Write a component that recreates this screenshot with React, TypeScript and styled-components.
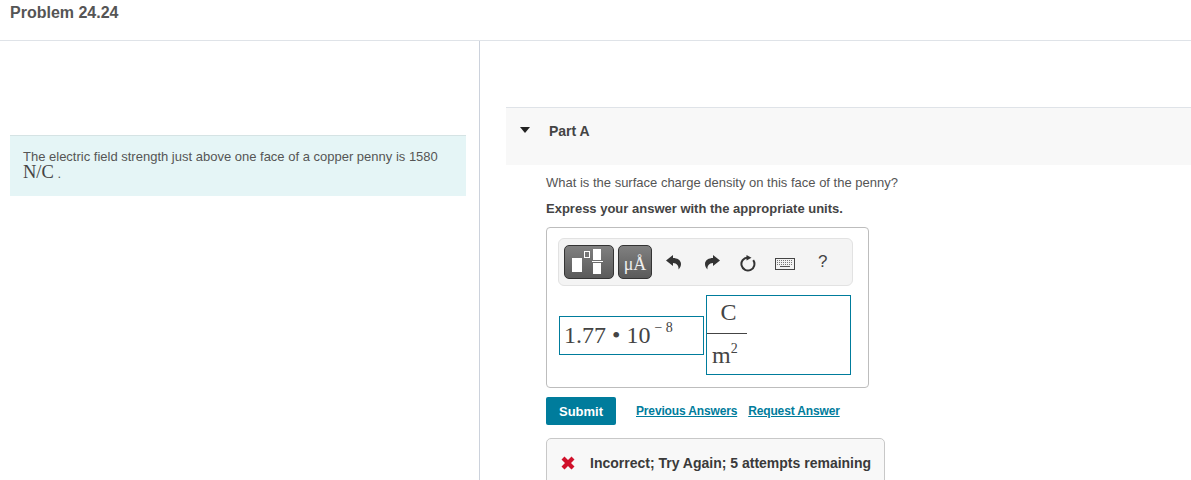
import React from "react";
import styled, { createGlobalStyle } from "styled-components";

const Global = createGlobalStyle`
  html, body { margin: 0; padding: 0; background: #fff; }
  body { font-family: "Liberation Sans", Arial, sans-serif; color: #444; overflow: hidden; height: 480px; }
  #root { height: 480px; overflow: hidden; }
`;

const Page = styled.div`
  width: 1191px;
  height: 480px;
  display: flex;
  flex-direction: column;
  overflow: hidden;
`;
const Header = styled.header`
  height: 40px;
  box-sizing: content-box;
  border-bottom: 1px solid #dfe3e8;
  padding-left: 10px;
`;
const Title = styled.h1`
  margin: 0;
  padding-top: 4px;
  font-size: 16px;
  line-height: 18px;
  font-weight: 700;
  color: #555;
`;
const Columns = styled.div`
  flex: 1;
  display: flex;
  min-height: 0;
`;
const LeftColumn = styled.aside`
  width: 480px;
  box-sizing: border-box;
  border-right: 1px solid #ccd2dc;
  padding-top: 94px;
  padding-left: 10px;
`;
const ProblemBox = styled.div`
  width: 456px;
  height: 61px;
  box-sizing: border-box;
  background: #e5f5f6;
  border-top: 1px solid #d5e3e4;
  padding: 13px 13px 0;
  font-size: 13px;
  line-height: 16px;
  color: #555;
`;
const MathUnit = styled.span`
  font-family: "Liberation Serif", serif;
  font-size: 18.5px;
  line-height: 14px;
  color: #444;
`;
const RightColumn = styled.main`
  flex: 1;
  padding-top: 66px;
  padding-left: 26px;
  min-width: 0;
`;
const PartHeader = styled.div`
  height: 58px;
  box-sizing: border-box;
  background: #f8f8f8;
  border-top: 1px solid #dfe3e8;
  display: flex;
  align-items: flex-start;
  padding: 15px 0 0 14px;
`;
const Caret = styled.svg`
  width: 10px;
  height: 6px;
  margin-top: 4px;
  margin-right: 19px;
  flex: none;
`;
const PartTitle = styled.span`
  font-size: 14px;
  line-height: 16px;
  font-weight: 700;
  color: #444;
`;
const PartBody = styled.section`
  padding-left: 40px;
`;
const Question = styled.p`
  margin: 0;
  padding-top: 11px;
  font-size: 13px;
  line-height: 14px;
  color: #555;
`;
const Instruction = styled.p`
  margin: 0;
  padding-top: 12px;
  font-size: 13px;
  line-height: 14px;
  font-weight: 700;
  color: #444;
`;
const AnswerPanel = styled.div`
  margin-top: 11px;
  width: 323px;
  height: 161px;
  box-sizing: border-box;
  border: 1px solid #bdbdbd;
  border-radius: 4px;
  padding: 10px 16px 0 11px;
`;
const Toolbar = styled.div`
  width: 295px;
  height: 48px;
  box-sizing: border-box;
  background: #f4f4f4;
  border: 1px solid #e2e2e2;
  border-radius: 6px;
  display: flex;
  align-items: center;
  padding-left: 5px;
`;
const TemplateButton = styled.div<{ $w: number; $mr: number }>`
  width: ${(p) => p.$w}px;
  height: 34px;
  margin-right: ${(p) => p.$mr}px;
  box-sizing: border-box;
  flex: none;
  border: 1px solid #333;
  border-radius: 5px;
  background: linear-gradient(#808080, #5a5a5a);
  display: flex;
  align-items: center;
  justify-content: center;
`;
const MuLabel = styled.span`
  font-family: "Liberation Serif", serif;
  font-size: 18px;
  color: #efefef;
  position: relative;
  top: 2px;
  line-height: 20px;
`;
const ToolIcon = styled.svg<{ $w: number; $ml: number }>`
  width: ${(p) => p.$w}px;
  height: 20px;
  margin-left: ${(p) => p.$ml}px;
  flex: none;
`;
const HelpMark = styled.span`
  margin-left: 23px;
  font-size: 17px;
  line-height: 18px;
  color: #444;
`;
const MathRow = styled.div`
  display: flex;
  align-items: center;
  margin-top: 9px;
  padding-left: 1px;
  gap: 2px;
`;
const ValueBox = styled.div`
  width: 145px;
  height: 39px;
  box-sizing: border-box;
  border: 1px solid #007c9c;
  padding-left: 4px;
  font-family: "Liberation Serif", serif;
  font-size: 24px;
  line-height: 37px;
  color: #444;
  white-space: nowrap;
`;
const Exponent = styled.sup`
  font-size: 14px;
  line-height: 0;
  vertical-align: 11px;
  margin-left: 4px;
`;
const UnitBox = styled.div`
  width: 145px;
  height: 80px;
  box-sizing: border-box;
  border: 1px solid #007c9c;
  font-family: "Liberation Serif", serif;
  color: #444;
`;
const Fraction = styled.div`
  width: 40px;
  display: flex;
  flex-direction: column;
`;
const Numerator = styled.div`
  width: 100%;
  height: 38px;
  box-sizing: border-box;
  border-bottom: 1px solid #444;
  text-align: center;
  padding-left: 3px;
  font-size: 24px;
  line-height: 33px;
`;
const Denominator = styled.div`
  padding-left: 5px;
  font-size: 24px;
  line-height: 42px;
`;
const UnitExp = styled.sup`
  font-size: 14px;
  line-height: 0;
  vertical-align: 10px;
`;
const Actions = styled.div`
  margin-top: 9px;
  display: flex;
  align-items: center;
`;
const SubmitButton = styled.button`
  width: 70px;
  height: 28px;
  background: #007c9c;
  color: #fff;
  border: 0;
  border-radius: 2px;
  padding: 0;
  font: 700 13px "Liberation Sans", Arial, sans-serif;
  margin-right: 20px;
`;
const ActionLink = styled.a`
  font-size: 12px;
  font-weight: 700;
  color: #007c9c;
  text-decoration: underline;
  margin-right: 11px;
  letter-spacing: -0.15px;
`;
const Feedback = styled.div`
  margin-top: 13px;
  width: 339px;
  height: 60px;
  box-sizing: border-box;
  background: #f8f8f8;
  border: 1px solid #c8c8c8;
  border-radius: 5px;
  display: flex;
  align-items: flex-start;
  padding: 16px 0 0 14px;
  font-size: 14px;
  line-height: 16px;
  font-weight: 700;
  color: #3a3a3a;
`;
const CrossIcon = styled.svg`
  width: 14px;
  height: 14px;
  margin-right: 15px;
  margin-top: 1px;
  flex: none;
`;

export default function App() {
  return (
    <Page>
      <Global />
      <Header>
        <Title>Problem 24.24</Title>
      </Header>
      <Columns>
        <LeftColumn>
          <ProblemBox>
            The electric field strength just above one face of a copper penny is 1580{" "}
            <MathUnit>N/C</MathUnit> .
          </ProblemBox>
        </LeftColumn>
        <RightColumn>
          <PartHeader>
            <Caret viewBox="0 0 10 6">
              <path d="M0 0h10L5 6z" fill="#222" />
            </Caret>
            <PartTitle>Part A</PartTitle>
          </PartHeader>
          <PartBody>
            <Question>What is the surface charge density on this face of the penny?</Question>
            <Instruction>Express your answer with the appropriate units.</Instruction>
            <AnswerPanel>
              <Toolbar>
                <TemplateButton $w={50} $mr={4}>
                  <svg width="48" height="32" viewBox="1 1 48 32">
                    <rect x="8" y="13" width="10" height="14" fill="#fff" />
                    <rect x="20.500" y="6.500" width="5" height="6" fill="none" stroke="#fff" strokeWidth="1" />
                    <rect x="29" y="4" width="8" height="11" fill="#fff" />
                    <rect x="28" y="16" width="11" height="1" fill="#fff" />
                    <rect x="29" y="18" width="8" height="11" fill="#fff" />
                  </svg>
                </TemplateButton>
                <TemplateButton $w={34} $mr={0}>
                  <MuLabel>μÅ</MuLabel>
                </TemplateButton>
                <ToolIcon $w={15} $ml={14} viewBox="0 -3 15 20">
                  <path d="M0 5.500 L7 0 V3 C11 3 15 5 15 9 C15 11 14 13 12.500 14.500 C13 11 11 8 7 8 V11 Z" fill="#333" />
                </ToolIcon>
                <ToolIcon $w={15} $ml={24} viewBox="0 -3 15 20">
                  <path d="M15 5.500 L8 0 V3 C4 3 0 5 0 9 C0 11 1 13 2.500 14.500 C2 11 4 8 8 8 V11 Z" fill="#333" />
                </ToolIcon>
                <ToolIcon $w={16} $ml={20} viewBox="0 -3 16 20">
                  <path d="M7.500 2.500 A6.500 6.500 0 1 0 13.200 5.200" fill="none" stroke="#333" strokeWidth="2" />
                  <path d="M6.500 0 L11.500 2.700 L6.500 5.500 Z" fill="#333" />
                </ToolIcon>
                <ToolIcon $w={20} $ml={19} viewBox="0 0 20 20">
                  <rect x="0.500" y="6.500" width="19" height="11" fill="#f2f2f2" stroke="#444" />
                  <path d="M2 8.500h16M2 10.500h16M2 12.500h16" stroke="#777" strokeWidth="1" strokeDasharray="1 1" />
                  <path d="M5 14.500h10" stroke="#555" strokeWidth="1" />
                </ToolIcon>
                <HelpMark>?</HelpMark>
              </Toolbar>
              <MathRow>
                <ValueBox>
                  1.77 • 10<Exponent>− 8</Exponent>
                </ValueBox>
                <UnitBox>
                  <Fraction>
                    <Numerator>C</Numerator>
                    <Denominator>
                      m<UnitExp>2</UnitExp>
                    </Denominator>
                  </Fraction>
                </UnitBox>
              </MathRow>
            </AnswerPanel>
            <Actions>
              <SubmitButton>Submit</SubmitButton>
              <ActionLink>Previous Answers</ActionLink>
              <ActionLink>Request Answer</ActionLink>
            </Actions>
            <Feedback>
              <CrossIcon viewBox="0 0 14 14">
                <path d="M0.500 3.500 L3.500 0.500 L7 4 L10.500 0.500 L13.500 3.500 L10 7 L13.500 10.500 L10.500 13.500 L7 10 L3.500 13.500 L0.500 10.500 L4 7 Z" fill="#d0112b" />
              </CrossIcon>
              Incorrect; Try Again; 5 attempts remaining
            </Feedback>
          </PartBody>
        </RightColumn>
      </Columns>
    </Page>
  );
}
